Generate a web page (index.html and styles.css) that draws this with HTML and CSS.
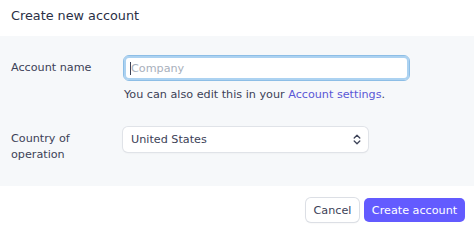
FILE: index.html
```html
<!DOCTYPE html>
<html>
<head>
<meta charset="utf-8">
<link rel="stylesheet" href="styles.css">
</head>
<body>
<div class="dialog">
  <header class="head"><h1 class="title">Create new account</h1></header>
  <section class="body">
    <div class="row row-name">
      <label class="label">Account name</label>
      <div class="control">
        <div class="input"><span class="caret"></span><span class="placeholder">Company</span></div>
        <p class="help">You can also edit this in your <a class="link">Account settings</a>.</p>
      </div>
    </div>
    <div class="row row-country">
      <label class="label">Country of<br>operation</label>
      <div class="control">
        <div class="select"><span>United States</span>
          <svg class="chev" width="8" height="11" viewBox="0 0 8 11"><path d="M1.2 4 L4 1.3 L6.8 4 M1.2 7 L4 9.7 L6.8 7" fill="none" stroke="#3c4257" stroke-width="1.3" stroke-linecap="round" stroke-linejoin="round"/></svg>
        </div>
      </div>
    </div>
  </section>
  <footer class="foot">
    <button class="btn btn-cancel">Cancel</button>
    <button class="btn btn-primary">Create account</button>
  </footer>
</div>
</body>
</html>
```
FILE: styles.css
```css
* { box-sizing: border-box; }
html, body { margin: 0; padding: 0; background: #fff; }
body { font-family: "DejaVu Sans", sans-serif; color: #3c4257; font-size: 11.2px; width: 474px; height: 228px; overflow: hidden; }
.head { height: 36px; padding: 7px 11px 0; }
.title { margin: 0; font-size: 12.8px; line-height: 17px; font-weight: normal; color: #2a2f45; }
.body { background: #f6f8fa; height: 150px; padding: 19px 11px 0; }
.row { display: grid; grid-template-columns: 112px 1fr; }
.label { line-height: 16px; }
.row-name .label { padding-top: 5px; }
.input { width: 287px; height: 26px; border-radius: 6px; background: #fff; border: 1px solid #8dbee6; box-shadow: inset 0 0 0 2px #acd2f1; display: flex; align-items: center; padding-left: 6px; }
.caret { width: 1px; height: 13px; background: #3c4257; }
.placeholder { color: #a8b0bc; font-size: 11.2px; }
.help { margin: 6px 0 0 1px; line-height: 16px; }
.link { color: #5a57d6; text-decoration: none; }
.row-country { margin-top: 24px; }
.row-country .label { margin-top: 4px; }
.select { width: 245px; height: 25px; background: #fff; border-radius: 5px; box-shadow: 0 0 0 1px #e0e3e8, 0 1px 2px rgba(0,0,0,0.08); display: flex; align-items: center; justify-content: space-between; padding: 0 6px 0 8px; }
.chev { margin-right: 1px; }
.foot { display: flex; justify-content: flex-end; gap: 5px; padding: 12px 9px 0 0; }
.btn { font-family: "DejaVu Sans", sans-serif; font-size: 11.2px; height: 24px; border-radius: 5px; border: none; padding: 0 6px; white-space: nowrap; }
.btn-cancel { background: #fff; color: #3c4257; box-shadow: 0 0 0 1px #dcdfe5, 0 1px 2px rgba(0,0,0,0.08); width: 53px; }
.btn-primary { background: #635bff; color: #fff; width: 101px; }
```
